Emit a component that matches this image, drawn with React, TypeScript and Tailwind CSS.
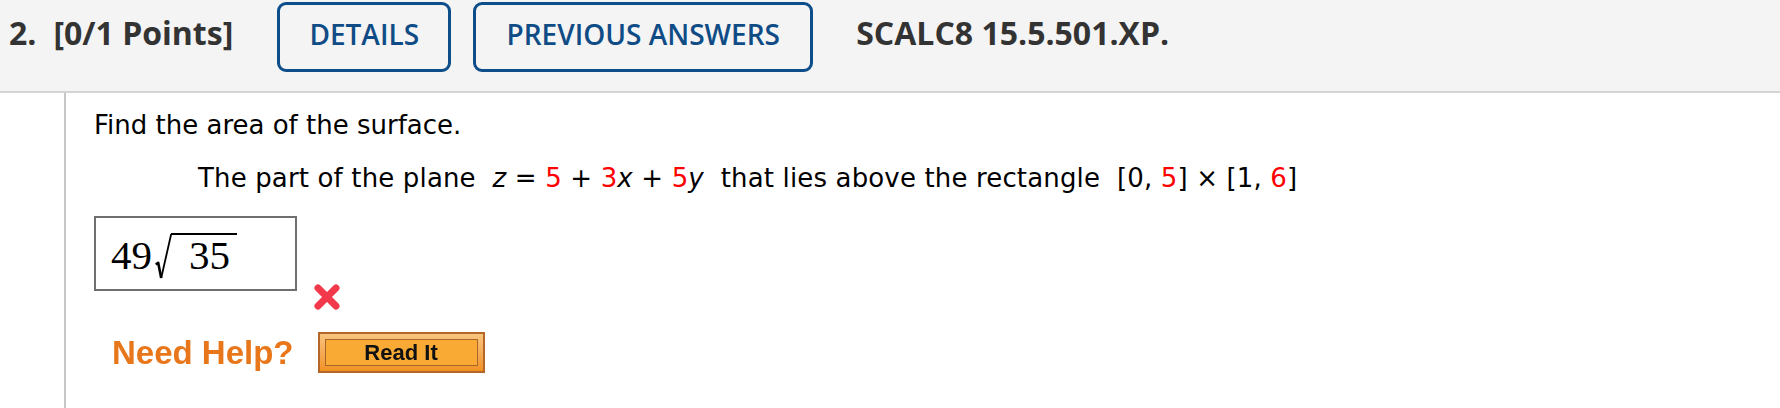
import React from 'react'

function Red({ children }: { children: React.ReactNode }) {
  return <span className="text-[#ff0000]">{children}</span>
}

function HeaderButton({ label, width }: { label: string; width: string }) {
  return (
    <div
      className={`${width} mt-[1px] h-[70px] flex items-center justify-center pb-[6px] border-[3px] border-[#0d4e8a] rounded-[9px]`}
    >
      <span className="text-[28px] leading-none font-semibold text-[#0f4c86]">{label}</span>
    </div>
  )
}

export default function App() {
  return (
    <div className="w-[1780px] h-[408px] bg-white overflow-hidden">
      {/* question header */}
      <div
        className="h-[93px] bg-[#f4f4f4] border-b-2 border-[#d4d4d4] flex items-start pl-[9px] text-[#333333]"
        style={{ fontFamily: "'Open Sans', sans-serif" }}
      >
        <div className="h-[72px] flex items-center">
          <span className="text-[32px] leading-none font-bold mb-[7px]">2.</span>
          <span className="text-[32px] leading-none font-bold mb-[7px] ml-[17px]">[0/1 Points]</span>
          <div className="ml-[44px]">
            <HeaderButton label="DETAILS" width="w-[174px]" />
          </div>
          <div className="ml-[22px]">
            <HeaderButton label="PREVIOUS ANSWERS" width="w-[340px]" />
          </div>
          <span className="text-[32px] leading-none font-bold mb-[7px] ml-[43px]">SCALC8 15.5.501.XP.</span>
        </div>
      </div>

      {/* question body */}
      <div className="ml-[64px] h-[315px] border-l-2 border-[#c6c6c6] pl-[28px]">
        <div
          className="text-[26px] leading-[30px] text-black"
          style={{ fontFamily: "'DejaVu Sans', Verdana, sans-serif" }}
        >
          <p className="pt-[17px]">Find the area of the surface.</p>
          <p className="mt-[23px] ml-[104px] whitespace-pre tracking-[0.15px]">
            The part of the plane{'\u00a0 '}
            <i>z</i> = <Red>5</Red> + <Red>3</Red>
            <i>x</i> + <Red>5</Red>
            <i>y</i>
            {'\u00a0 '}that lies above the rectangle{'\u00a0 '}[0, <Red>5</Red>] × [1, <Red>6</Red>]
          </p>
        </div>

        {/* answer */}
        <div className="flex items-start mt-[23px]">
          <div
            className="w-[203px] h-[75px] border-2 border-[#6f6f6f] flex items-start pl-[15px] pt-[15px] text-black text-[41px] leading-none"
            style={{ fontFamily: "'Liberation Serif', 'Times New Roman', serif" }}
          >
            <span className="mt-[2px]">49</span>
            <svg width="17" height="47" viewBox="0 0 17 47" className="ml-[3px]">
              <path d="M0.8 31.5 L3.2 29.8 L6.2 45" fill="none" stroke="black" strokeWidth="2.6" strokeLinejoin="round" />
              <path d="M6.2 45 L16.2 1" fill="none" stroke="black" strokeWidth="1.8" />
            </svg>
            <span className="border-t-2 border-black pl-[18px] pr-[7px] ml-[-1px]">35</span>
          </div>
          <svg width="30" height="30" viewBox="0 0 30 30" className="ml-[15px] mt-[66px] blur-[0.6px]">
            <path d="M6 6 L24 24 M24 6 L6 24" stroke="#f2394b" strokeWidth="7" strokeLinecap="round" />
          </svg>
        </div>

        {/* help */}
        <div className="flex items-center mt-[20px] ml-[18px]" style={{ fontFamily: "'Liberation Sans', Arial, sans-serif" }}>
          <span className="text-[33px] leading-none font-bold text-[#e8771c] blur-[0.4px]">Need Help?</span>
          <div className="ml-[24px] w-[167px] h-[41px] border-2 border-[#b5672a] bg-gradient-to-b from-[#f9c47e] to-[#f0921f] p-[5px] flex">
            <div className="flex-1 border border-[#a9662a] bg-[#f9aa34] flex items-center justify-center">
              <span className="text-[22px] leading-none font-bold text-[#111111] blur-[0.3px]">Read It</span>
            </div>
          </div>
        </div>
      </div>
    </div>
  )
}
